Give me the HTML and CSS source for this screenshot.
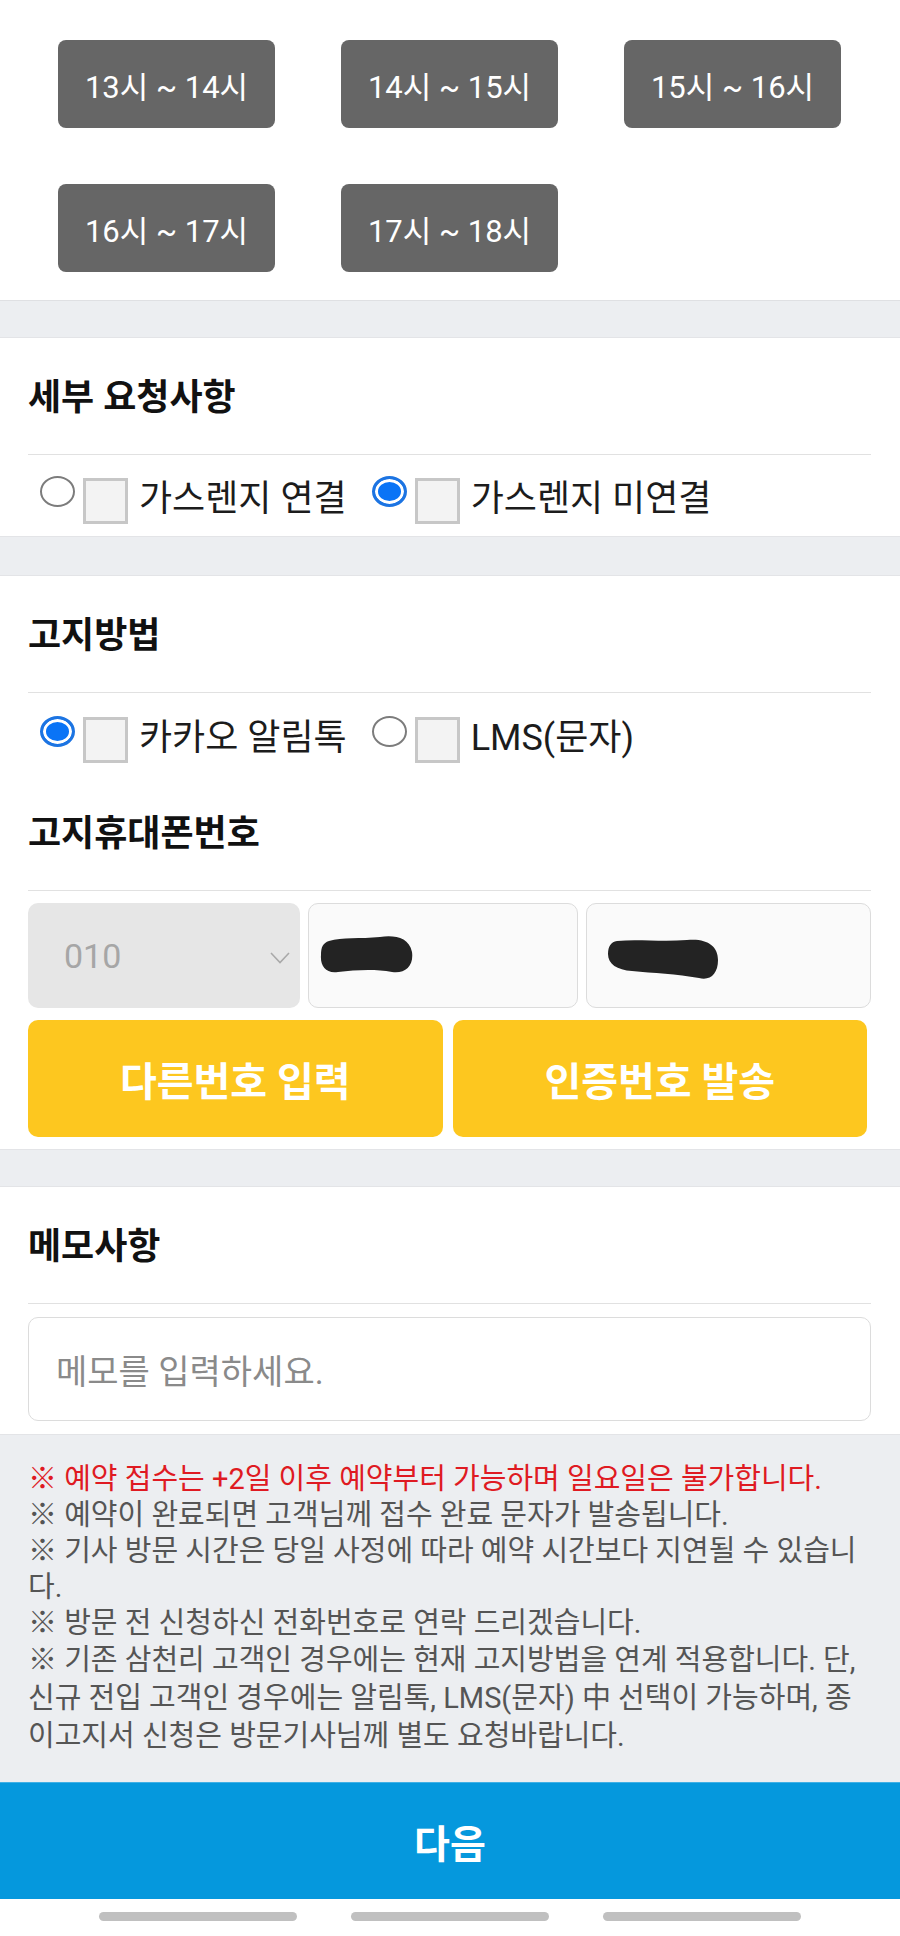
FILE: index.html
```html
<!DOCTYPE html>
<html lang="ko">
<head>
<meta charset="utf-8">
<title>예약</title>
<link rel="stylesheet" href="styles.css">
</head>
<body>
<div class="page">
  <section class="times">
    <div class="slot">13시 ~ 14시</div>
    <div class="slot">14시 ~ 15시</div>
    <div class="slot">15시 ~ 16시</div>
    <div class="slot">16시 ~ 17시</div>
    <div class="slot">17시 ~ 18시</div>
  </section>

  <section class="card">
    <h2 class="card-title">세부 요청사항</h2>
    <div class="options">
      <label class="option"><span class="radio"></span><span class="box"></span><span class="opt-text">가스렌지 연결</span></label>
      <label class="option"><span class="radio checked"></span><span class="box"></span><span class="opt-text">가스렌지 미연결</span></label>
    </div>
  </section>

  <section class="card card-notice">
    <h2 class="card-title">고지방법</h2>
    <div class="options options-tall">
      <label class="option"><span class="radio checked"></span><span class="box"></span><span class="opt-text">카카오 알림톡</span></label>
      <label class="option"><span class="radio"></span><span class="box"></span><span class="opt-text">LMS(문자)</span></label>
    </div>
    <h2 class="card-title card-title-sub">고지휴대폰번호</h2>
    <div class="phone">
      <div class="select">
        <span class="select-value">010</span>
        <svg class="chevron" width="20" height="12" viewBox="0 0 20 12"><polyline points="1,1 10,10.5 19,1" fill="none" stroke="#a9a9a9" stroke-width="1.6"/></svg>
      </div>
      <div class="field field-mid">
        <svg class="blob" width="93" height="40" viewBox="0 0 93 40"><path d="M9 7 C22 3 40 5 60 3 C74 1 89 3 92 18 C94 32 85 40 72 38 C55 35 36 36 18 38 C6 40 0 32 1 21 C1 13 3 9 9 7 Z" fill="#232323"/></svg>
      </div>
      <div class="field field-end">
        <svg class="blob" width="112" height="42" viewBox="0 0 112 42"><path d="M10 3 C30 1 55 4 80 2 C100 0 111 8 111 22 C111 36 103 43 92 40 C70 36 46 35 25 33 C10 32 1 26 1 16 C1 8 4 4 10 3 Z" fill="#232323"/></svg>
      </div>
    </div>
    <div class="actions">
      <button class="btn-yellow" type="button">다른번호 입력</button>
      <button class="btn-yellow" type="button">인증번호 발송</button>
    </div>
  </section>

  <section class="card card-memo">
    <h2 class="card-title">메모사항</h2>
    <div class="memo"><span class="placeholder">메모를 입력하세요.</span></div>
  </section>

  <section class="notes">
    <p class="note note-red">※ 예약 접수는 +2일 이후 예약부터 가능하며 일요일은 불가합니다.</p>
    <p class="note">※ 예약이 완료되면 고객님께 접수 완료 문자가 발송됩니다.</p>
    <p class="note">※ 기사 방문 시간은 당일 사정에 따라 예약 시간보다 지연될 수 있습니<br>다.</p>
    <p class="note">※ 방문 전 신청하신 전화번호로 연락 드리겠습니다.</p>
    <p class="note note-last">※ 기존 삼천리 고객인 경우에는 현재 고지방법을 연계 적용합니다. 단,<br>신규 전입 고객인 경우에는 알림톡, LMS(문자) 中 선택이 가능하며, 종<br>이고지서 신청은 방문기사님께 별도 요청바랍니다.</p>
  </section>

  <button class="next" type="button">다음</button>

  <div class="navbar">
    <span class="pill"></span>
    <span class="pill"></span>
    <span class="pill"></span>
  </div>
</div>
</body>
</html>
```

FILE: styles.css
```css
html, body {
  margin: 0;
  padding: 0;
}
body {
  background: #eceef1;
  font-family: "Roboto", "Noto Sans CJK KR", "Noto Sans", sans-serif;
  color: #1a1a1a;
}
.page {
  width: 900px;
  height: 1936px;
  display: flex;
  flex-direction: column;
  overflow: hidden;
}

/* time slots */
.times {
  background: #fff;
  padding: 40px 0 28px 58px;
  display: grid;
  grid-template-columns: repeat(3, 217px);
  grid-auto-rows: 88px;
  column-gap: 66px;
  row-gap: 56px;
  border-bottom: 1px solid #dfe0e3;
}
.slot {
  background: #666;
  color: #fff;
  border-radius: 8px;
  font-size: 31px;
  display: flex;
  align-items: center;
  justify-content: center;
}

/* cards */
.card {
  background: #fff;
  padding: 0 29px 0 28px;
  border-top: 1px solid #e3e4e7;
  border-bottom: 1px solid #e3e4e7;
  margin-top: 36px;
}
.card-notice {
  margin-top: 38px;
  padding-bottom: 12px;
}
.card-memo {
  margin-top: 36px;
  padding-bottom: 13px;
}
.card-title {
  margin: 0;
  box-sizing: border-box;
  height: 117px;
  padding-top: 4px;
  display: flex;
  align-items: center;
  font-size: 36px;
  font-weight: 700;
  line-height: 1;
  color: #111;
  border-bottom: 1.5px solid #e1e1e1;
}
.card-title-sub {
  height: 114px;
  padding-top: 0;
}

/* radio options */
.options {
  height: 81px;
  display: flex;
  align-items: center;
  padding-left: 12px;
  gap: 25px;
}
.options-tall {
  height: 84px;
}
.option {
  display: flex;
  align-items: center;
}
.radio {
  box-sizing: border-box;
  width: 35px;
  height: 31px;
  border-radius: 50%;
  border: 2px solid #7c7c7c;
  background: #fff;
  margin-bottom: 8px;
}
.radio.checked {
  border: 3px solid #1c74e2;
  background: #0a74f6;
  box-shadow: inset 0 0 0 3px #fff;
}
.box {
  box-sizing: border-box;
  width: 45px;
  height: 46px;
  margin-left: 8px;
  margin-top: 10px;
  border: 3px solid #c7c7c7;
  background: #f3f3f3;
}
.opt-text {
  margin-left: 11px;
  margin-top: 6px;
  font-size: 36px;
  line-height: 42px;
  color: #1c1c1c;
}

/* phone */
.phone {
  display: grid;
  grid-template-columns: 272px 270px 1fr;
  gap: 8px;
  height: 105px;
  margin-top: 12px;
}
.select {
  background: #e6e6e6;
  border-radius: 10px;
  display: flex;
  align-items: center;
  justify-content: space-between;
  padding: 0 10px 0 36px;
}
.select-value {
  font-size: 34px;
  color: #a6a6a6;
}
.chevron {
  margin-top: 4px;
}
.field {
  box-sizing: border-box;
  background: #fafafa;
  border: 1.5px solid #dcdcdc;
  border-radius: 10px;
  display: flex;
  align-items: center;
}
.field-mid {
  padding-left: 11px;
}
.field-mid .blob {
  margin-top: -4px;
}
.field-end {
  padding-left: 20px;
}
.field-end .blob {
  margin-top: 6px;
}

/* actions */
.actions {
  display: grid;
  grid-template-columns: 1fr 1fr;
  gap: 10px;
  margin-top: 12px;
  padding-right: 4px;
}
.btn-yellow {
  height: 117px;
  border: 0;
  border-radius: 10px;
  background: #fdc71f;
  color: #fff;
  font-family: inherit;
  font-size: 40px;
  font-weight: 700;
  display: flex;
  align-items: center;
  justify-content: center;
  padding: 0;
}

/* memo */
.memo {
  box-sizing: border-box;
  height: 104px;
  margin-top: 13px;
  border: 1.5px solid #dcdcdc;
  border-radius: 10px;
  background: #fff;
  display: flex;
  align-items: center;
  padding-left: 27px;
}
.placeholder {
  font-size: 34px;
  color: #8a8a8a;
}

/* notes */
.notes {
  padding: 26px 4px 27px 28px;
}
.note {
  margin: 0;
  font-size: 29px;
  line-height: 36px;
  color: #555;
  white-space: nowrap;
}
.note-last {
  line-height: 38px;
}
.note-red {
  color: #df1a22;
}

/* next */
.next {
  height: 117px;
  border: 0;
  border-top: 1px solid #3fb0e6;
  background: #0598dd;
  color: #fff;
  font-family: inherit;
  font-size: 39px;
  font-weight: 700;
  padding: 0;
  flex-shrink: 0;
}

/* navbar */
.navbar {
  flex: 1;
  background: #fff;
  display: flex;
  justify-content: center;
  align-items: flex-start;
  gap: 54px;
  padding-top: 13px;
}
.pill {
  width: 198px;
  height: 9px;
  border-radius: 5px;
  background: #c0c0c0;
}
```
